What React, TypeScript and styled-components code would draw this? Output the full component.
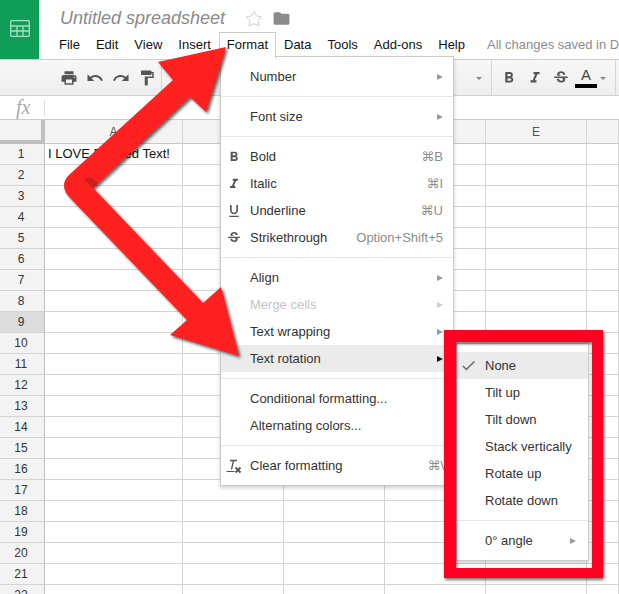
import React from 'react';
import styled, { createGlobalStyle } from 'styled-components';
import { Star } from 'lucide-react';
import {
  MdPrint,
  MdUndo,
  MdRedo,
  MdFormatPaint,
  MdFormatBold,
  MdFormatItalic,
  MdFormatUnderlined,
  MdStrikethroughS,
  MdFolder,
  MdCheck,
} from 'react-icons/md';

const menuBarItems = ['File', 'Edit', 'View', 'Insert', 'Format', 'Data', 'Tools', 'Add-ons', 'Help'];
const rowNumbers = Array.from({ length: 22 }, (_, i) => i + 1);

const ClearIcon = () => (
  <svg width="16" height="16" viewBox="0 0 16 16" fill="none" stroke="#555">
    <path d="M4 2.5h7M7.5 2.5 5.5 11.5" strokeWidth="1.3" />
    <path d="M0.5 13.5h8" strokeWidth="1" />
    <path d="M9.5 9.5l5 5M14.5 9.5l-5 5" strokeWidth="1.8" />
  </svg>
);

const App = () => {
  return (
    <Page>
      <GlobalStyle />
      <Header>
        <Logo>
          <svg width="20" height="17" viewBox="0 0 20 17" fill="none" stroke="#a9dfc2" strokeWidth="1.3">
            <rect x="0.7" y="0.7" width="18.6" height="15.6" rx="1" />
            <path d="M0.7 6h18.6M0.7 11h18.6M7 6v10.3M13 6v10.3" />
          </svg>
        </Logo>
        <HeaderMain>
          <TitleRow>
            <Title>Untitled spreadsheet</Title>
            <Star size={18} color="#c4c4c4" strokeWidth={1.1} />
            <MdFolder size={19} color="#8a8a8a" />
          </TitleRow>
          <MenuBar>
            {menuBarItems.map((item) =>
              item === 'Format' ? (
                <ActiveMenuItem key={item}>{item}</ActiveMenuItem>
              ) : (
                <MenuBarItem key={item}>{item}</MenuBarItem>
              ),
            )}
            <SaveStatus>All changes saved in Drive</SaveStatus>
          </MenuBar>
        </HeaderMain>
      </Header>

      <Toolbar>
        <ToolGroup $left={60}>
          <MdPrint size={18} />
          <MdUndo size={18} />
          <MdRedo size={18} />
          <MdFormatPaint size={18} />
        </ToolGroup>
        <ToolSeparator />
        <RightTools>
          <Caret />
          <ToolSeparator $margin="0 8px 0 9px" />
          <ToolGroup>
            <MdFormatBold size={18} />
            <MdFormatItalic size={18} />
            <MdStrikethroughS size={18} />
          </ToolGroup>
          <TextColor>
            A
            <ColorBar />
          </TextColor>
          <Caret />
          <ToolSeparator $margin="0 3px 0 9px" />
        </RightTools>
      </Toolbar>

      <FormulaBar>
        <FxCell>fx</FxCell>
      </FormulaBar>

      <ColumnHeaderRow>
        <Corner />
        <ColumnHeader>A</ColumnHeader>
        <ColumnHeader>B</ColumnHeader>
        <ColumnHeader>C</ColumnHeader>
        <ColumnHeader>D</ColumnHeader>
        <ColumnHeader>E</ColumnHeader>
        <ColumnHeader />
      </ColumnHeaderRow>

      {rowNumbers.map((n) => (
        <Row key={n}>
          <RowHeader $active={n === 9}>{n}</RowHeader>
          <Cell>{n === 1 ? 'I LOVE Rotated Text!' : ''}</Cell>
          <Cell />
          <Cell />
          <Cell />
          <Cell />
          <Cell />
        </Row>
      ))}

      <FormatMenu>
        <MenuItem>
          <ItemLabel>Number</ItemLabel>
          <SubArrow />
        </MenuItem>
        <MenuSeparator />
        <MenuItem>
          <ItemLabel>Font size</ItemLabel>
          <SubArrow />
        </MenuItem>
        <MenuSeparator />
        <MenuItem>
          <ItemIcon><MdFormatBold size={16} /></ItemIcon>
          <ItemLabel>Bold</ItemLabel>
          <Shortcut>⌘B</Shortcut>
        </MenuItem>
        <MenuItem>
          <ItemIcon><MdFormatItalic size={16} /></ItemIcon>
          <ItemLabel>Italic</ItemLabel>
          <Shortcut>⌘I</Shortcut>
        </MenuItem>
        <MenuItem>
          <ItemIcon><MdFormatUnderlined size={16} /></ItemIcon>
          <ItemLabel>Underline</ItemLabel>
          <Shortcut>⌘U</Shortcut>
        </MenuItem>
        <MenuItem>
          <ItemIcon><MdStrikethroughS size={16} /></ItemIcon>
          <ItemLabel>Strikethrough</ItemLabel>
          <Shortcut>Option+Shift+5</Shortcut>
        </MenuItem>
        <MenuSeparator />
        <MenuItem>
          <ItemLabel>Align</ItemLabel>
          <SubArrow />
        </MenuItem>
        <MenuItem $disabled>
          <ItemLabel>Merge cells</ItemLabel>
          <SubArrow $color="#ccc" />
        </MenuItem>
        <MenuItem>
          <ItemLabel>Text wrapping</ItemLabel>
          <SubArrow />
        </MenuItem>
        <MenuItem $active>
          <ItemLabel>Text rotation</ItemLabel>
          <SubArrow $color="#111" />
        </MenuItem>
        <MenuSeparator />
        <MenuItem>
          <ItemLabel>Conditional formatting...</ItemLabel>
        </MenuItem>
        <MenuItem>
          <ItemLabel>Alternating colors...</ItemLabel>
        </MenuItem>
        <MenuSeparator />
        <MenuItem>
          <ItemIcon><ClearIcon /></ItemIcon>
          <ItemLabel>Clear formatting</ItemLabel>
          <ClippedShortcut>⌘\</ClippedShortcut>
        </MenuItem>
      </FormatMenu>

      <RotationMenu>
        <RotationItem $active>
          <CheckSlot><MdCheck size={17} /></CheckSlot>
          None
        </RotationItem>
        <RotationItem>Tilt up</RotationItem>
        <RotationItem>Tilt down</RotationItem>
        <RotationItem>Stack vertically</RotationItem>
        <RotationItem>Rotate up</RotationItem>
        <RotationItem>Rotate down</RotationItem>
        <MenuSeparator />
        <RotationItem>
          <ItemLabel>0° angle</ItemLabel>
          <SubArrow />
        </RotationItem>
      </RotationMenu>

      <Highlight />

      <Arrows width="619" height="594" viewBox="0 0 619 594">
        <ArrowShape d="M226 47 L206 112 L190 97 L93 188 L203 303 L221 287 L239 356 L170 335 L187 320 L72 200 Q57 186 70 174 L173 80 L158 62 Z" />
        <path d="M93 188 L84 179 L90 177 L98 183 Z" fill="#a81c1c" opacity="0.6" />
      </Arrows>
    </Page>
  );
};

const GlobalStyle = createGlobalStyle`
  html, body {
    margin: 0;
    padding: 0;
    background: #fff;
  }
`;

const Page = styled.div`
  position: relative;
  width: 619px;
  height: 594px;
  overflow: hidden;
  background: #fff;
  font-family: "Liberation Sans", "DejaVu Sans", Arial, sans-serif;
  font-size: 13px;
  color: #333;
`;

const Header = styled.header`
  display: flex;
  height: 59px;
`;

const Logo = styled.div`
  width: 39px;
  flex: none;
  display: flex;
  align-items: center;
  justify-content: center;
  padding-bottom: 2px;
  box-sizing: border-box;
  background: #0f9d58;
`;

const HeaderMain = styled.div`
  display: flex;
  flex-direction: column;
  padding-left: 12px;
  min-width: 0;
`;

const TitleRow = styled.div`
  display: flex;
  align-items: center;
  gap: 9px;
  height: 32px;
  padding: 5px 0 0 9px;
  box-sizing: border-box;
`;

const Title = styled.div`
  margin-right: 11px;
  font-size: 18px;
  font-style: italic;
  color: #8a8a8a;
  white-space: nowrap;
`;

const MenuBar = styled.nav`
  display: flex;
  align-items: flex-start;
  white-space: nowrap;
`;

const MenuBarItem = styled.div`
  padding: 5px 8px 0;
  line-height: 15px;
  color: #111;
`;

const ActiveMenuItem = styled(MenuBarItem)`
  position: relative;
  z-index: 5;
  height: 26px;
  padding: 4px 7px 0;
  box-sizing: border-box;
  background: #fff;
  border: 1px solid #ccc;
  border-bottom: none;
`;

const SaveStatus = styled.div`
  padding: 5px 0 0 14px;
  line-height: 15px;
  color: #8c8c8c;
`;

const Toolbar = styled.div`
  display: flex;
  align-items: center;
  height: 37px;
  box-sizing: border-box;
  background: linear-gradient(#f7f7f7, #eeeeee);
  border-top: 1px solid #d0d0d0;
  border-bottom: 1px solid #cfcfcf;
  color: #555;
`;

const ToolGroup = styled.div<{ $left?: number }>`
  display: flex;
  align-items: center;
  gap: 8px;
  padding-left: ${(p) => p.$left ?? 0}px;
`;

const ToolSeparator = styled.div<{ $margin?: string }>`
  width: 1px;
  height: 35px;
  margin: ${(p) => p.$margin ?? '0 0 0 5px'};
  background: #d6d6d6;
`;

const RightTools = styled.div`
  display: flex;
  align-items: center;
  margin-left: auto;
`;

const Caret = styled.div`
  width: 0;
  height: 0;
  margin-top: 2px;
  border-left: 3px solid transparent;
  border-right: 3px solid transparent;
  border-top: 3px solid #888;
`;

const TextColor = styled.div`
  position: relative;
  width: 22px;
  height: 24px;
  margin: 0 3px 0 5px;
  font-size: 15px;
  line-height: 17px;
  text-align: center;
  color: #444;
`;

const ColorBar = styled.div`
  height: 4px;
  margin-top: 1px;
  background: #000;
`;

const FormulaBar = styled.div`
  display: flex;
  align-items: center;
  height: 24px;
  box-sizing: border-box;
  border-bottom: 1px solid #ccc;
`;

const FxCell = styled.div`
  width: 45px;
  height: 16px;
  box-sizing: border-box;
  padding-left: 16px;
  border-right: 1px solid #ddd;
  font-family: "Liberation Serif", serif;
  font-size: 20px;
  font-style: italic;
  line-height: 14px;
  color: #aaaaaa;
`;

const gridColumns = '45px 138px repeat(4, 101px) 1fr';

const ColumnHeaderRow = styled.div`
  display: grid;
  grid-template-columns: ${gridColumns};
  height: 24px;
`;

const Corner = styled.div`
  background: #f3f3f3;
  border-right: 4px solid #c0c0c0;
  border-bottom: 4px solid #c0c0c0;
`;

const ColumnHeader = styled.div`
  display: flex;
  align-items: center;
  justify-content: center;
  background: #f3f3f3;
  border-right: 1px solid #d4d4d4;
  border-bottom: 1px solid #c8c8c8;
  font-size: 12px;
  color: #555;
`;

const Row = styled.div`
  display: grid;
  grid-template-columns: ${gridColumns};
  height: 21px;
`;

const RowHeader = styled.div<{ $active?: boolean }>`
  display: flex;
  align-items: center;
  justify-content: center;
  padding-right: 2px;
  background: ${(p) => (p.$active ? '#dcdcdc' : '#f3f3f3')};
  border-right: 1px solid #c0c0c0;
  border-bottom: 1px solid #d4d4d4;
  font-size: 12px;
  color: #333;
`;

const Cell = styled.div`
  padding-left: 3px;
  border-right: 1px solid #d4d4d4;
  border-bottom: 1px solid #d4d4d4;
  font-size: 13px;
  line-height: 20px;
  color: #111;
  white-space: nowrap;
`;

const FormatMenu = styled.div`
  position: absolute;
  z-index: 3;
  left: 220px;
  top: 56px;
  width: 234px;
  box-sizing: border-box;
  padding: 6px 0;
  background: #fff;
  border: 1px solid #ccc;
  box-shadow: 0 2px 4px rgba(0, 0, 0, 0.2);
`;

const MenuItem = styled.div<{ $active?: boolean; $disabled?: boolean }>`
  position: relative;
  display: flex;
  align-items: center;
  height: 27px;
  padding: 0 10px 0 29px;
  background: ${(p) => (p.$active ? '#ebebeb' : 'transparent')};
  color: ${(p) => (p.$disabled ? '#c4c4c4' : '#333')};
`;

const ItemIcon = styled.span`
  position: absolute;
  left: 5px;
  display: flex;
  width: 16px;
  justify-content: center;
  color: #555;
`;

const ItemLabel = styled.span`
  flex: 1;
  white-space: nowrap;
`;

const Shortcut = styled.span`
  color: #8c8c8c;
  white-space: nowrap;
`;

const ClippedShortcut = styled(Shortcut)`
  margin-right: -1px;
`;

const SubArrow = styled.span<{ $color?: string }>`
  width: 0;
  height: 0;
  border-top: 3.5px solid transparent;
  border-bottom: 3.5px solid transparent;
  border-left: 6px solid ${(p) => p.$color ?? '#999'};
`;

const MenuSeparator = styled.div`
  height: 1px;
  margin: 6px 0;
  background: #e6e6e6;
`;

const RotationMenu = styled.div`
  position: absolute;
  z-index: 3;
  left: 456px;
  top: 343px;
  width: 133px;
  box-sizing: border-box;
  padding: 8px 0 6px;
  background: #fff;
  border: 1px solid #ccc;
  box-shadow: 0 2px 4px rgba(0, 0, 0, 0.2);
`;

const RotationItem = styled.div<{ $active?: boolean }>`
  position: relative;
  display: flex;
  align-items: center;
  height: 27px;
  padding: 0 12px 0 28px;
  background: ${(p) => (p.$active ? '#ebebeb' : 'transparent')};
  white-space: nowrap;
`;

const CheckSlot = styled.span`
  position: absolute;
  left: 3px;
  display: flex;
  color: #666;
`;

const Highlight = styled.div`
  position: absolute;
  z-index: 4;
  left: 444px;
  top: 330px;
  width: 159px;
  height: 248px;
  box-sizing: border-box;
  border: solid #ff0022;
  border-width: 12px 11px 10px 12px;
  filter: drop-shadow(1.5px 2px 1.5px rgba(0, 0, 0, 0.55));
`;

const Arrows = styled.svg`
  position: absolute;
  z-index: 6;
  left: 0;
  top: 0;
  pointer-events: none;
`;

const ArrowShape = styled.path`
  fill: #ff2020;
  filter: drop-shadow(2px 2px 1.5px rgba(0, 0, 0, 0.6));
`;

export default App;
